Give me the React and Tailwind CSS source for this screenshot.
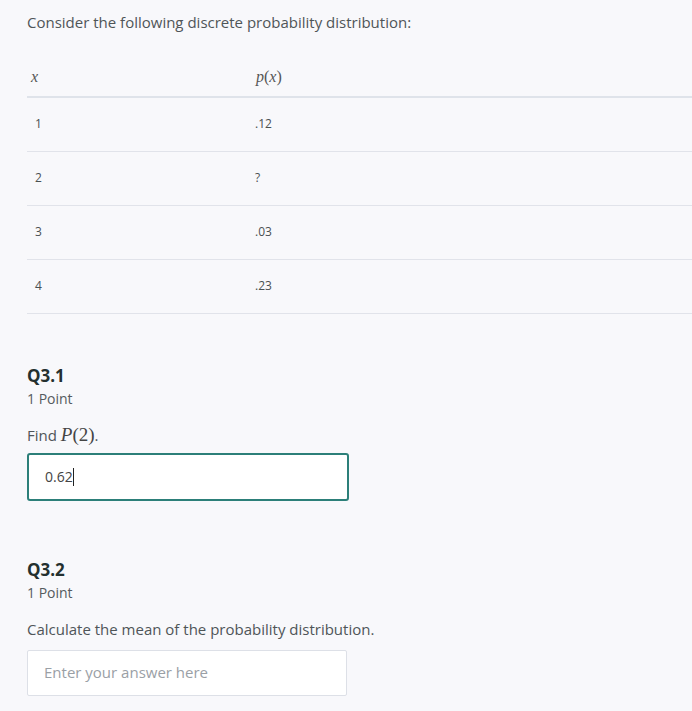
import React from "react";

const rows = [
  ["1", ".12"],
  ["2", "?"],
  ["3", ".03"],
  ["4", ".23"],
];

function Question({ num, children }) {
  return (
    <div>
      <div className="text-[17px] font-bold leading-[22px] text-[#24302f]">{num}</div>
      <div className="text-[14px] leading-[20px] text-[#555b5e] mt-[2px]">1 Point</div>
      {children}
    </div>
  );
}

export default function App() {
  return (
    <div
      className="min-h-screen bg-[#f8f8fb] text-[#4a5052] pl-[27px] pt-[12px]"
      style={{ fontFamily: "'Open Sans', Lato, sans-serif" }}
    >
      <p className="text-[15px] leading-[20px] text-[#4f5558]">
        Consider the following discrete probability distribution:
      </p>

      <table className="w-full mt-[25px] border-collapse text-[12px]">
        <thead>
          <tr className="border-b-2 border-[#dfe3ea]">
            <th className="w-[225px] h-[40px] text-left font-normal pl-[4px]">
              <span className="italic text-[16px] text-[#555]" style={{ fontFamily: "'Liberation Serif', serif" }}>x</span>
            </th>
            <th className="text-left font-normal pl-[4px]">
              <span className="italic text-[16px] text-[#555]" style={{ fontFamily: "'Liberation Serif', serif" }}>
                p<span className="not-italic">(</span>x<span className="not-italic">)</span>
              </span>
            </th>
          </tr>
        </thead>
        <tbody>
          {rows.map(([x, p]) => (
            <tr key={x} className="border-b border-[#e1e3ea]">
              <td className="h-[54px] pl-[8px] text-[#4a5052]">{x}</td>
              <td className="pl-[3px] text-[#4a5052]">{p}</td>
            </tr>
          ))}
        </tbody>
      </table>

      <div className="mt-[51px]">
        <Question num="Q3.1">
          <p className="mt-[14px] text-[15px] leading-[24px] text-[#4f5558]">
            Find{" "}
            <span className="text-[19px] text-[#444]" style={{ fontFamily: "'Liberation Serif', serif" }}>
              <span className="italic">P</span>(2)
            </span>
            .
          </p>
          <div className="mt-[6px] w-[322px] h-[48px] bg-white border-2 border-[#2c7f79] rounded-[3px] flex items-center pl-[16px] text-[14px] text-[#444]">
            0.62<span className="inline-block w-px h-[18px] bg-[#222]"></span>
          </div>
        </Question>
      </div>

      <div className="mt-[58px] pb-[17px]">
        <Question num="Q3.2">
          <p className="mt-[14px] text-[15px] leading-[24px] text-[#4f5558]">
            Calculate the mean of the probability distribution.
          </p>
          <div className="mt-[9px] w-[320px] h-[46px] bg-white border border-[#dde0e7] rounded-[2px] flex items-center pl-[16px] text-[15px] text-[#9aa0a6]">
            Enter your answer here
          </div>
        </Question>
      </div>
    </div>
  );
}
